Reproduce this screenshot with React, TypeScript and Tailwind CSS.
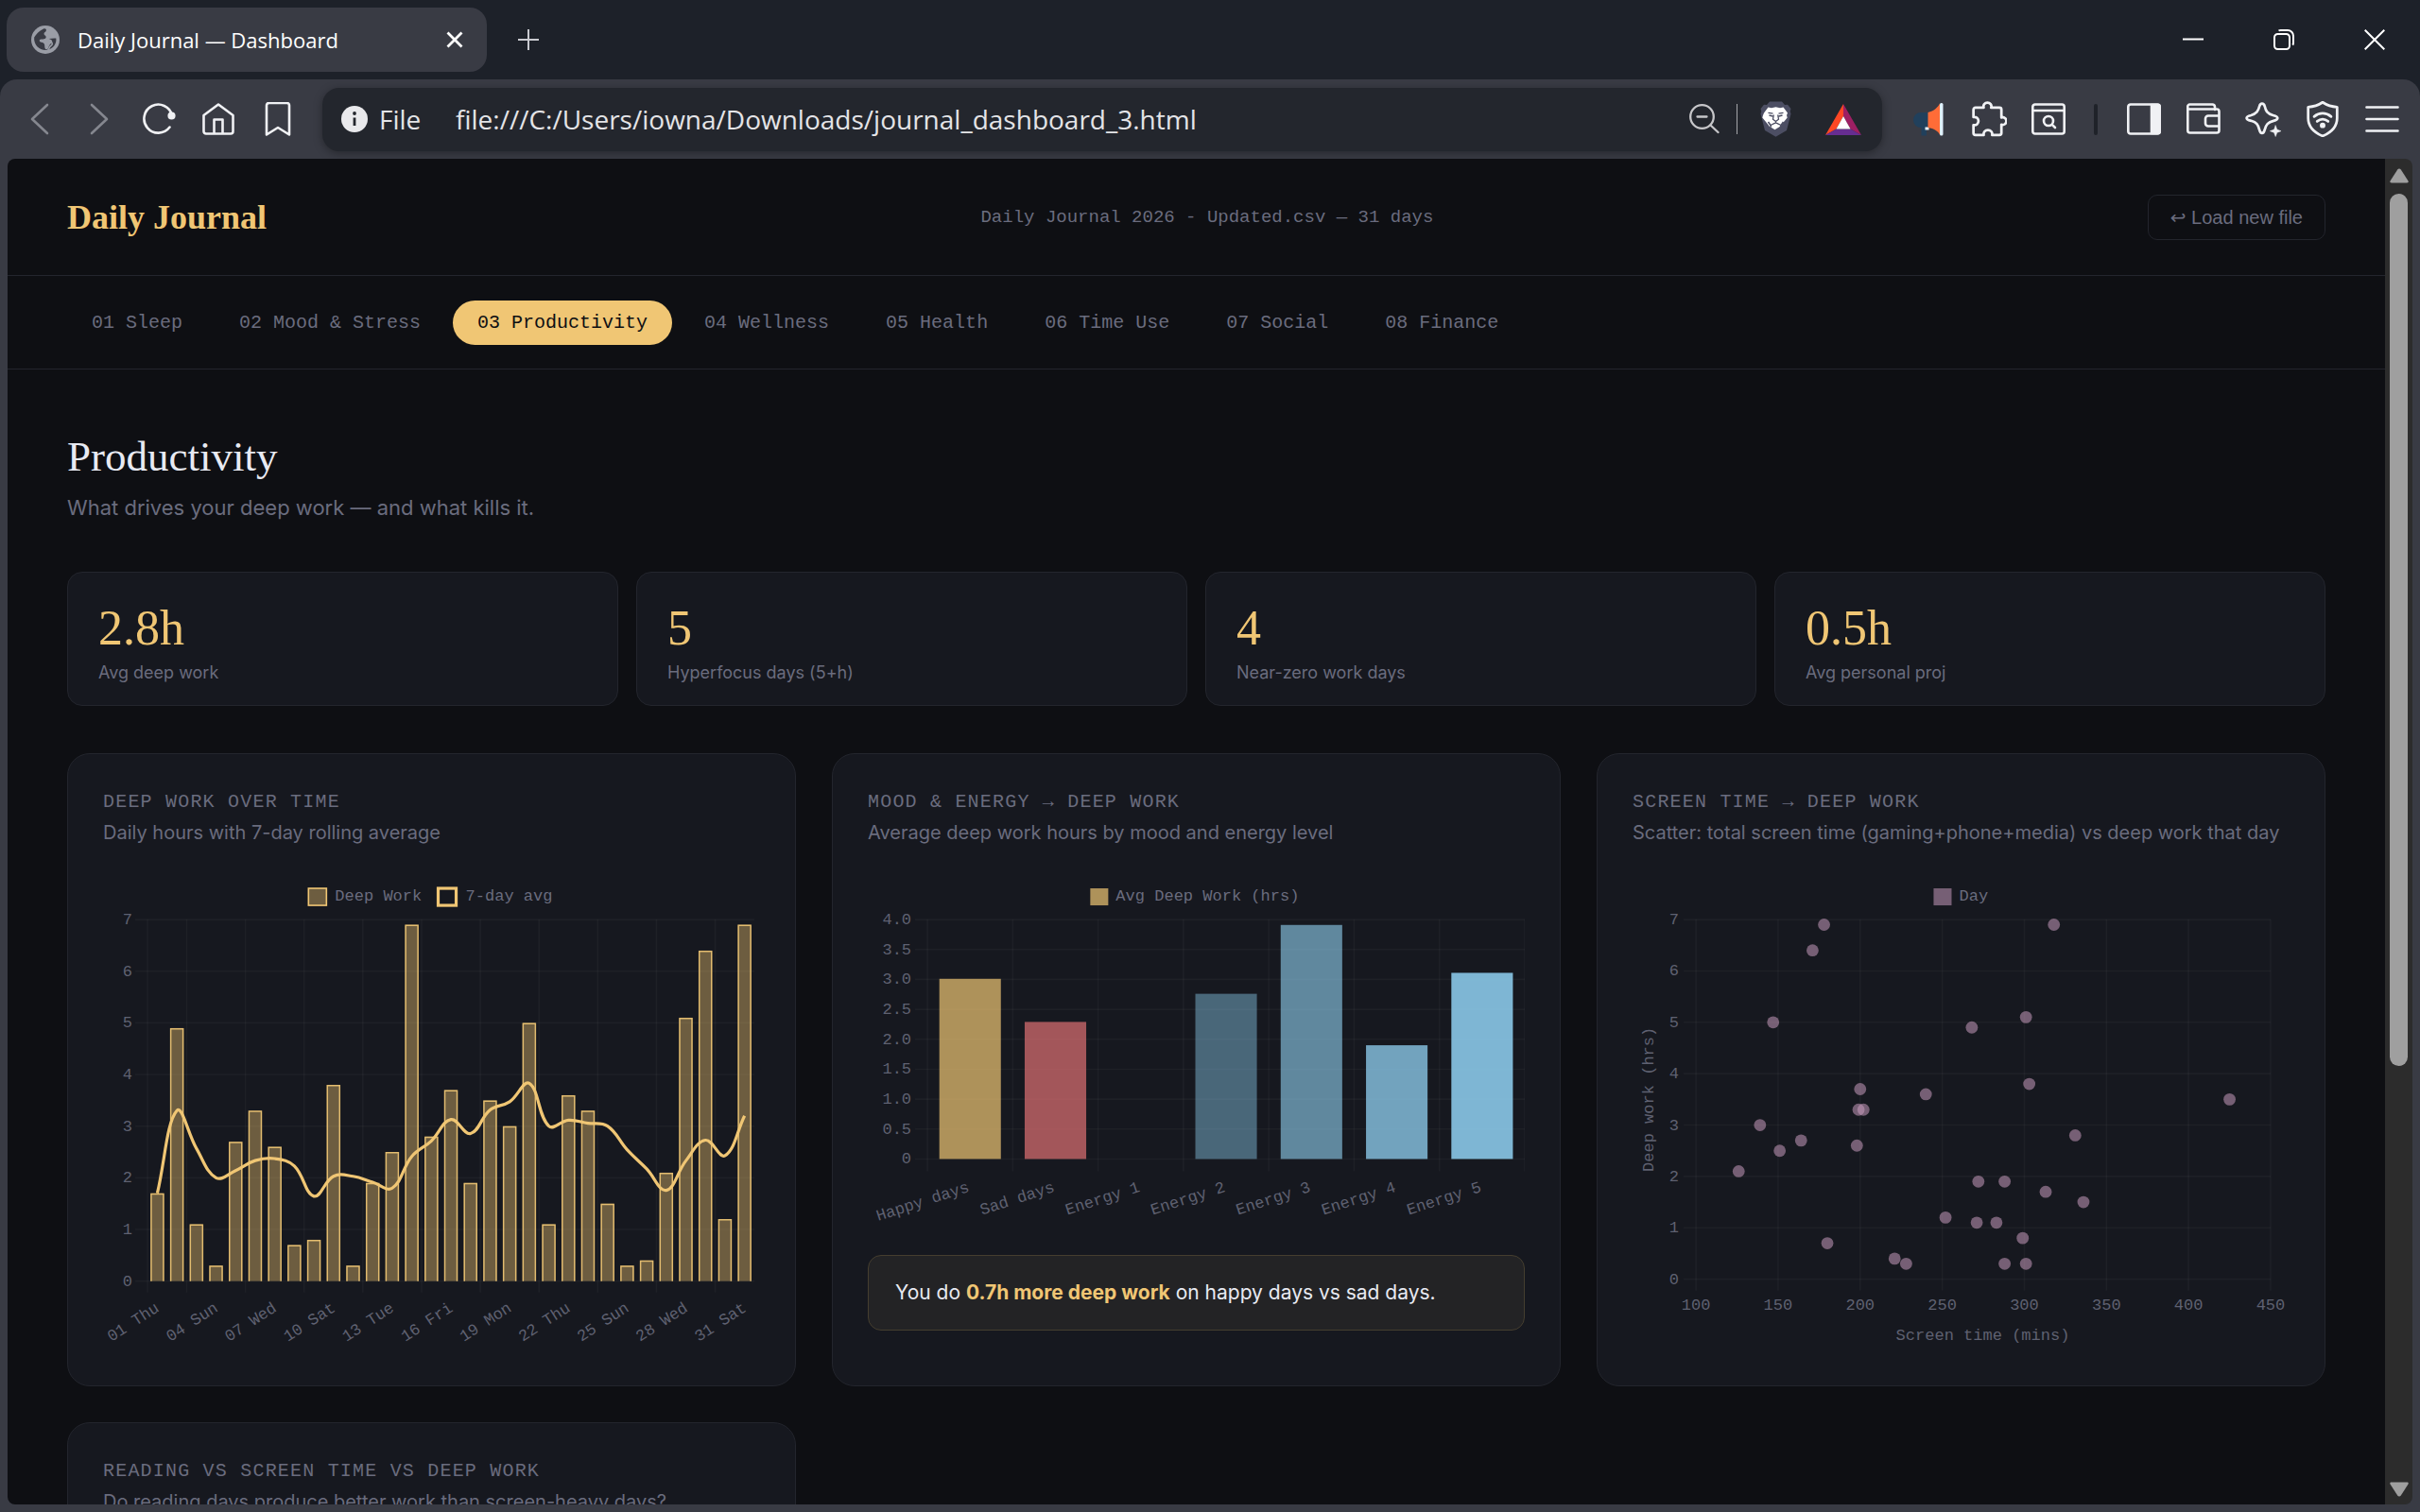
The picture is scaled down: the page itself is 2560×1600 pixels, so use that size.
import type { ReactNode } from "react";

const SERIF = "font-['Liberation_Serif',serif]";
const MONO = "font-['Liberation_Mono',monospace]";
const CHART_FONT = "'Liberation Mono', monospace";
const TICK = "#5f6171";
const LEGEND = "#6a6c7e";
const GRID = "rgba(255,255,255,0.035)";
const GOLD = "#f0c674";

/* ---------- browser chrome ---------- */

function Globe() {
  return (
    <svg viewBox="0 0 30 30" className="size-[30px] shrink-0" aria-hidden="true">
      <circle cx="15" cy="15" r="15" fill="#9a9da6" />
      <path
        d="M3.2 12.5C5 9.5 8 5.500 13 3.400c2.200-.4 3.300.4 2.800 2.100-.4 1.500-2.300 1.700-2.300 3.300 0 1.500 2.200 1.700 2.200 3.400 0 1.600-1.500 2.300-3.400 2.300H10.500c-1.500 0-2.200 1.200-1.500 2.300.8 1.200 2.800.9 4.200 1.900 1.500 1.100.8 3.300 1.300 5 .3 1.200 1.400 2.100 2.600 1.300 1.500-1 1.200-3.200 2.400-4.600 1.100-1.300 2.700-1.700 2.700-3.400 0-1.900-2.100-2-3.300-2.900 2.500-.4 5-1 7.400-.5 1 5.800-3.500 11.900-10.300 12.400C9 26.500 2.300 20.500 3.200 12.500z"
        fill="#393b44"
      />
      <path d="M13.200 15.600c1.800-1.600 4-1.300 5.200.2 1.300 1.500 3.900 1.300 3.900 3.500 0 1.700-1.900 2-2.800 3.500-.8 1.300-.9 3.300-2.400 3.700" fill="none" stroke="#9a9da6" strokeWidth="1.600" />
    </svg>
  );
}

function ToolButton({ label, children }: { label: string; children: ReactNode }) {
  return (
    <button type="button" aria-label={label} className="flex h-12 w-[63px] items-center justify-center">
      {children}
    </button>
  );
}

function Icon({ children, w = 36, dim = false }: { children: ReactNode; w?: number; dim?: boolean }) {
  return (
    <svg
      width={w}
      height={w}
      viewBox="0 0 36 36"
      fill="none"
      stroke={dim ? "#85878f" : "#f0f1f4"}
      strokeWidth="2.600"
      strokeLinecap="round"
      strokeLinejoin="round"
      aria-hidden="true"
    >
      {children}
    </svg>
  );
}

function TabStrip() {
  return (
    <div className="flex h-[84px] shrink-0 items-start pl-[7px]">
      <div className="mt-2 flex h-[68px] w-[508px] items-center rounded-[18px] bg-[#393b44] pr-[22px] pl-[26px]">
        <Globe />
        <span className="ml-[19px] flex-1 text-[22px] whitespace-nowrap text-white">Daily Journal — Dashboard</span>
        <button type="button" aria-label="Close tab" className="flex size-6 items-center justify-center">
          <svg viewBox="0 0 18 18" className="size-[18px]" stroke="#fff" strokeWidth="2.800" aria-hidden="true">
            <path d="M1.500 1.500l15 15M16.500 1.500l-15 15" />
          </svg>
        </button>
      </div>
      <button type="button" aria-label="New tab" className="mt-6 ml-[26px] flex size-9 items-center justify-center">
        <svg viewBox="0 0 22 22" className="size-[22px]" stroke="#c9cad0" strokeWidth="2" aria-hidden="true">
          <path d="M0 11h22M11 0v22" />
        </svg>
      </button>
      <div className="mt-6 ml-auto flex">
        <button type="button" aria-label="Minimize" className="flex h-9 w-24 items-center justify-center">
          <svg viewBox="0 0 22 22" className="size-[22px]" stroke="#fff" strokeWidth="2" aria-hidden="true">
            <path d="M0 10.500h22" />
          </svg>
        </button>
        <button type="button" aria-label="Restore" className="flex h-9 w-24 items-center justify-center">
          <svg viewBox="0 0 22 22" className="size-[22px]" fill="none" stroke="#fff" strokeWidth="2" aria-hidden="true">
            <rect x="1" y="5" width="16" height="16" rx="3.500" />
            <path d="M5.500 1.500C6 1.200 6.500 1 7.500 1H15a6 6 0 0 1 6 6v7.500c0 1-.2 1.500-.7 2.200" />
          </svg>
        </button>
        <button type="button" aria-label="Close window" className="flex h-9 w-24 items-center justify-center">
          <svg viewBox="0 0 22 22" className="size-[22px]" stroke="#fff" strokeWidth="2" aria-hidden="true">
            <path d="M.7.7l20.600 20.600M21.300.7L.7 21.300" />
          </svg>
        </button>
      </div>
    </div>
  );
}

function AddressBar() {
  return (
    <div className="ml-4 flex h-[67px] min-w-0 flex-1 items-center rounded-[18px] bg-[#23262d] pr-[22px] pl-5 shadow-[0_2px_10px_rgba(0,0,0,0.35)]">
      <svg viewBox="0 0 28 28" className="size-7 shrink-0" aria-hidden="true">
        <circle cx="14" cy="14" r="14" fill="#e9e9ec" />
        <circle cx="14" cy="8" r="1.900" fill="#23262d" />
        <path d="M14 12.500v8.500" stroke="#23262d" strokeWidth="2.800" />
      </svg>
      <label htmlFor="address" className="ml-3 w-[81px] text-[28px] text-[#e4e4e7]">
        File
      </label>
      <input
        id="address"
        type="text"
        defaultValue="file:///C:/Users/iowna/Downloads/journal_dashboard_3.html"
        className="min-w-0 flex-1 bg-transparent text-[28px] text-[#e4e4e7] outline-none"
      />
      <button type="button" aria-label="Zoom out" className="shrink-0">
        <svg viewBox="0 0 32 32" className="size-8" fill="none" stroke="#c6c6c9" strokeWidth="2.300" strokeLinecap="round" aria-hidden="true">
          <circle cx="13.500" cy="13.500" r="12.300" />
          <path d="M22.500 22.500L30.500 30M8.500 13.500h10" />
        </svg>
      </button>
      <span className="ml-[18px] h-8 w-px shrink-0 bg-[#a5a6aa]" />
      <button type="button" aria-label="Brave Shields" className="ml-6 shrink-0">
        <svg viewBox="0 0 33 38" className="h-[38px] w-[33px]" aria-hidden="true">
          <path
            d="M10 0.500h13l3 3.500 3-.3 3.500 4.300-.8 3 .8 2.500-4.500 17.500L22 34.500l-5.500 3.300L11 34.500 5 31 .5 13.500l.8-2.500-.8-3L4 3.700l3 .3z"
            fill="#4c4e63"
          />
          <path
            d="M4 12.500L8.500 6.500l3.500.8 4.500-1.100 4.500 1.100 3.500-.8 4.500 6-1 2.500.7 2.500-6.200 7.500-1 1.500-6 3.700-6-3.700-1-1.500-6.200-7.500.7-2.500z"
            fill="#fff"
          />
          <path
            d="M8.500 12.300l5 .9M24.500 12.300l-5 .9M9.500 15l3.800 1M23.500 15l-3.800 1M14.300 14.500l-.8 4.700 3 2.300 3-2.300-.8-4.700M16.500 21.500v1.800M11 25.500l5.500-2.700 5.500 2.700"
            fill="none"
            stroke="#4c4e63"
            strokeWidth="1.300"
          />
          <path d="M8.500 22l2.500 3.500.5 2M24.500 22L22 25.500l-.5 2" fill="none" stroke="#4c4e63" strokeWidth="1.600" />
        </svg>
      </button>
      <button type="button" aria-label="Brave Rewards" className="ml-9 shrink-0">
        <svg viewBox="0 0 38 33" className="h-[33px] w-[38px]" aria-hidden="true">
          <path d="M19 0v13L11.500 26.500 0 33z" fill="#ff4724" />
          <path d="M19 0v13l7.500 13.500L38 33z" fill="#9e1f63" />
          <path d="M0 33h38l-11.500-6.500h-15z" fill="#662d91" />
          <path d="M19 13l7.500 13.500h-15z" fill="#fff" />
        </svg>
      </button>
    </div>
  );
}

function Toolbar() {
  return (
    <div className="flex h-[84px] shrink-0 items-center rounded-t-[18px] bg-[#393b44] pr-[9px] pl-[10px]">
      <ToolButton label="Back">
        <Icon dim>
          <path d="M26 3L10 18l16 15" />
        </Icon>
      </ToolButton>
      <ToolButton label="Forward">
        <Icon dim>
          <path d="M10 3l16 15-16 15" />
        </Icon>
      </ToolButton>
      <ToolButton label="Reload">
        <Icon>
          <path d="M29.500 26.500A15 15 0 1 1 32 14" />
          <circle cx="31.500" cy="14.500" r="2.800" fill="#f0f1f4" />
        </Icon>
      </ToolButton>
      <ToolButton label="Home">
        <Icon>
          <path d="M2.500 14L18 2.500 33.500 14v17a2.500 2.500 0 0 1-2.500 2.500H5A2.500 2.500 0 0 1 2.500 31zM13.500 33V18.500h9V33" />
        </Icon>
      </ToolButton>
      <ToolButton label="Bookmark">
        <Icon>
          <path d="M6 3.500A2.500 2.500 0 0 1 8.500 1h19A2.500 2.500 0 0 1 30 3.500V34.500L18 27 6 34.500z" />
        </Icon>
      </ToolButton>
      <AddressBar />
      <div className="ml-[18px] flex shrink-0 items-center">
        <ToolButton label="Announcement extension">
          <svg width="34" height="36" viewBox="0 0 34 36" aria-hidden="true">
            <path d="M8 11h8v16h-2v8.500H8.500V27H8a8 8 0 0 1 0-16z" fill="#21405c" />
            <path d="M12.500 26.500h4v3h-4z" fill="#e9f3fb" />
            <path d="M15.500 11C22 9.500 26 5.500 28 1.500v33C26 30.500 22 28 15.500 27z" fill="#ff6c37" />
            <rect x="28" y="1" width="3.500" height="34.500" rx="1.500" fill="#dff0fc" />
          </svg>
        </ToolButton>
        <ToolButton label="Extensions">
          <Icon w={38}>
            <path d="M4.500 6.500h8.300c-1-2.800 1.200-5 3.700-5s4.700 2.200 3.700 5h8.300a2 2 0 0 1 2 2v8c2.800-1 5 1.200 5 3.500s-2.200 4.500-5 3.500v8.500a2 2 0 0 1-2 2h-7.300c.6-3-1.500-5-4.200-5s-4.800 2-4.200 5H4.500a2 2 0 0 1-2-2v-8c3 .6 5-1.500 5-4s-2-4.600-5-4V8.500a2 2 0 0 1 2-2z" />
          </Icon>
        </ToolButton>
        <ToolButton label="Search tabs">
          <Icon>
            <rect x="1.300" y="2.500" width="33.400" height="31" rx="2.500" />
            <path d="M2 9h32" />
            <circle cx="18" cy="20" r="5" />
            <path d="M21.800 23.800l3.200 3.200" />
          </Icon>
        </ToolButton>
        <div className="flex w-[38px] justify-center">
          <span className="h-[33px] w-1 rounded-full bg-[#1f2229]" />
        </div>
        <ToolButton label="Sidebar">
          <Icon>
            <rect x="1.300" y="2.500" width="33.400" height="31" rx="2.500" />
            <path d="M26 3h7a1.500 1.500 0 0 1 1.500 1.500v27A1.500 1.500 0 0 1 33 33h-7z" fill="#f0f1f4" />
          </Icon>
        </ToolButton>
        <ToolButton label="Wallet">
          <Icon>
            <path d="M30 8V5a2.500 2.500 0 0 0-2.500-2.500h-24A2.200 2.200 0 0 0 1.300 5v25A2.500 2.500 0 0 0 3.800 32.500H32a2.500 2.500 0 0 0 2.500-2.500V10A2.500 2.500 0 0 0 32 7.500H2M34 14.500H23a3 3 0 0 0-3 3v5a3 3 0 0 0 3 3h11" />
          </Icon>
        </ToolButton>
        <ToolButton label="Leo AI">
          <Icon w={38}>
            <path d="M17 2.500c1.500 0 2.200 1 2.600 2.500 1.200 5 2.400 7.600 8.400 9.200 2 .5 4.500 1.300 4.500 2.800s-2 2.200-4 2.700c-5.500 1.500-7.700 3.800-9 9.300-.4 1.700-1 3-2.500 3s-2.200-1.300-2.600-3c-1.300-5.500-3-7.800-8.400-9.300-2-.5-4.500-1.200-4.500-2.700S4 14.700 6 14.200c5.500-1.600 7.200-4.200 8.400-9.200.4-1.500 1.100-2.500 2.600-2.500z" />
            <path d="M30.500 24.500l1.500 4 4 1.500-4 1.500-1.500 4-1.500-4-4-1.500 4-1.500z" fill="#f0f1f4" strokeWidth="0.500" />
          </Icon>
        </ToolButton>
        <ToolButton label="VPN">
          <Icon w={38}>
            <path d="M18 1.200c4.500 3 9 4.500 14.500 4.800V17c0 8-5 14-14.500 18C8.500 31 3.500 25 3.500 17V6C9 5.700 13.500 4.200 18 1.200z" />
            <path d="M9.500 15.500c5-4.300 12-4.300 17 0M12.500 20.300c3.500-2.800 7.500-2.800 11 0" />
            <circle cx="18" cy="24.300" r="1.500" fill="#f0f1f4" />
          </Icon>
        </ToolButton>
        <ToolButton label="Menu">
          <Icon>
            <path d="M1.500 5.500h33M1.500 18h33M1.500 30.500h33" />
          </Icon>
        </ToolButton>
      </div>
    </div>
  );
}

function Scrollbar() {
  return (
    <div className="flex w-[29px] shrink-0 flex-col items-center bg-[#2c2c2c]" aria-hidden="true">
      <svg viewBox="0 0 20 16" className="mt-[10px] h-4 w-5 shrink-0">
        <path d="M8.200 1.500a2.200 2.200 0 0 1 3.600 0l7.700 12c.6 1 0 2-1.200 2H1.700c-1.200 0-1.800-1-1.200-2z" fill="#9f9f9f" />
      </svg>
      <div className="mt-[11px] flex w-[19px] flex-1 flex-col">
        <div className="flex-[21] rounded-full bg-[#9f9f9f]" />
        <div className="flex-[10]" />
      </div>
      <svg viewBox="0 0 20 16" className="mb-2 h-4 w-5 shrink-0">
        <path d="M8.200 14.500a2.200 2.200 0 0 0 3.600 0l7.700-12c.6-1 0-2-1.200-2H1.700c-1.200 0-1.800 1-1.200 2z" fill="#9f9f9f" />
      </svg>
    </div>
  );
}

/* ---------- charts ---------- */

function HGrid({ ys, x1, x2 }: { ys: number[]; x1: number; x2: number }) {
  return (
    <>
      {ys.map((y) => (
        <line key={y} x1={x1} x2={x2} y1={y} y2={y} stroke={GRID} strokeWidth="1.600" />
      ))}
    </>
  );
}

function VGrid({ xs, y1, y2 }: { xs: number[]; y1: number; y2: number }) {
  return (
    <>
      {xs.map((x) => (
        <line key={x} x1={x} x2={x} y1={y1} y2={y2} stroke={GRID} strokeWidth="1.600" />
      ))}
    </>
  );
}

const deepWork = [
  1.7, 4.9, 1.1, 0.3, 2.7, 3.3, 2.6, 0.7, 0.8, 3.8, 0.3, 1.9, 2.5, 6.9, 2.8, 3.7, 1.9, 3.5, 3.0, 5.0, 1.1, 3.6, 3.3,
  1.5, 0.3, 0.4, 2.1, 5.1, 6.4, 1.2, 6.9,
];
const dayLabels = ["01 Thu", "04 Sun", "07 Wed", "10 Sat", "13 Tue", "16 Fri", "19 Mon", "22 Thu", "25 Sun", "28 Wed", "31 Sat"];

type Point = { x: number; y: number };

/* Cardinal spline whose control points are weighted by segment length. */
function spline(points: Point[], tension: number) {
  const controls = points.map((p, i) => {
    const prev = points[i - 1] ?? p;
    const next = points[i + 1] ?? p;
    const d01 = Math.hypot(p.x - prev.x, p.y - prev.y);
    const d12 = Math.hypot(next.x - p.x, next.y - p.y);
    const fa = (tension * d01) / (d01 + d12);
    const fb = (tension * d12) / (d01 + d12);
    return {
      before: { x: p.x - fa * (next.x - prev.x), y: p.y - fa * (next.y - prev.y) },
      after: { x: p.x + fb * (next.x - prev.x), y: p.y + fb * (next.y - prev.y) },
    };
  });
  return points
    .map((p, i) => {
      if (i === 0) return `M${p.x} ${p.y}`;
      const a = controls[i - 1].after;
      const b = controls[i].before;
      return `C${a.x} ${a.y} ${b.x} ${b.y} ${p.x} ${p.y}`;
    })
    .join("");
}

function DeepWorkChart() {
  const left = 47;
  const right = 688;
  const top = 57;
  const bottom = 439;
  const step = (right - left) / deepWork.length;
  const cx = (i: number) => left + step * (i + 0.5);
  const y = (v: number) => bottom - ((bottom - top) * v) / 7;
  const ticks = [0, 1, 2, 3, 4, 5, 6, 7];
  const average = deepWork.map((_, i) => {
    const window = deepWork.slice(Math.max(0, i - 6), i + 1);
    return { x: cx(i), y: y(window.reduce((a, b) => a + b, 0) / window.length) };
  });
  return (
    <svg viewBox="0 0 694 512" className="mt-[21px] block w-full" fontFamily={CHART_FONT} fontSize="17" role="img" aria-label="Deep work over time">
      <rect x="217" y="24" width="19" height="18" fill={GOLD} fillOpacity="0.400" stroke={GOLD} strokeWidth="1.600" />
      <text x="245" y="37" fill={LEGEND}>Deep Work</text>
      <rect x="354" y="24" width="19" height="18" fill="none" stroke={GOLD} strokeWidth="3.200" />
      <text x="383" y="37" fill={LEGEND}>7-day avg</text>
      <HGrid ys={ticks.map(y)} x1={34} x2={right} />
      <VGrid xs={[left, ...Array.from({ length: 10 }, (_, k) => left + step * (2 + 3 * k))]} y1={top} y2={bottom + 12} />
      {ticks.map((t) => (
        <text key={t} x="31" y={y(t) + 5} textAnchor="end" fill={TICK}>{t}</text>
      ))}
      {deepWork.map((v, i) => (
        <g key={i}>
          <rect x={cx(i) - 7} y={y(v)} width="14" height={bottom - y(v)} fill={GOLD} fillOpacity="0.400" />
          <path d={`M${cx(i) - 6.5} ${bottom}V${y(v) + 0.8}H${cx(i) + 6.5}V${bottom}`} fill="none" stroke={GOLD} strokeOpacity="0.900" strokeWidth="1.500" />
        </g>
      ))}
      <path d={spline(average, 0.4)} fill="none" stroke={GOLD} strokeWidth="3.200" strokeLinejoin="round" />
      {dayLabels.map((label, k) => (
        <text key={label} textAnchor="end" fill={TICK} transform={`translate(${cx(k * 3) + 3} 470) rotate(-33)`}>{label}</text>
      ))}
    </svg>
  );
}

const moodBars = [
  { label: "Happy days", value: 3.01, color: GOLD, alpha: 0.7 },
  { label: "Sad days", value: 2.29, color: "#e07074", alpha: 0.7 },
  { label: "Energy 1", value: 0, color: "#88c4e4", alpha: 0.3 },
  { label: "Energy 2", value: 2.76, color: "#88c4e4", alpha: 0.46 },
  { label: "Energy 3", value: 3.91, color: "#88c4e4", alpha: 0.65 },
  { label: "Energy 4", value: 1.9, color: "#88c4e4", alpha: 0.81 },
  { label: "Energy 5", value: 3.11, color: "#88c4e4", alpha: 0.92 },
];

function MoodChart() {
  const left = 63;
  const right = 694;
  const top = 57;
  const bottom = 310;
  const step = (right - left) / 7;
  const y = (v: number) => bottom - ((bottom - top) * v) / 4;
  const ticks = [0, 0.5, 1, 1.5, 2, 2.5, 3, 3.5, 4];
  return (
    <svg viewBox="0 0 694 384" className="mt-[21px] block w-full" fontFamily={CHART_FONT} fontSize="17" role="img" aria-label="Mood and energy against deep work">
      <rect x="235" y="24" width="19" height="18" fill={GOLD} fillOpacity="0.700" />
      <text x="262" y="37" fill={LEGEND}>Avg Deep Work (hrs)</text>
      <HGrid ys={ticks.map(y)} x1={50} x2={right} />
      <VGrid xs={Array.from({ length: 8 }, (_, k) => left + step * k)} y1={top} y2={bottom + 13} />
      {ticks.map((t) => (
        <text key={t} x="46" y={y(t) + 5} textAnchor="end" fill={TICK}>{t === 0 ? "0" : t.toFixed(1)}</text>
      ))}
      {moodBars.map((b, i) => {
        const cx = left + step * (i + 0.5);
        return (
          <g key={b.label}>
            <rect x={cx - 32.5} y={y(b.value)} width="65" height={bottom - y(b.value)} fill={b.color} fillOpacity={b.alpha} />
            <text textAnchor="end" fill={TICK} transform={`translate(${cx} 344) rotate(-18)`}>{b.label}</text>
          </g>
        );
      })}
    </svg>
  );
}

const days: [number, number][] = [
  [178, 6.9], [171, 6.4], [147, 5.0], [268, 4.9], [301, 5.1], [318, 6.9], [200, 3.7], [240, 3.6], [303, 3.8], [425, 3.5],
  [199, 3.3], [202, 3.3], [139, 3.0], [151, 2.5], [164, 2.7], [198, 2.6], [331, 2.8], [126, 2.1], [272, 1.9], [288, 1.9],
  [313, 1.7], [336, 1.5], [252, 1.2], [271, 1.1], [283, 1.1], [299, 0.8], [180, 0.7], [221, 0.4], [228, 0.3], [288, 0.3],
  [301, 0.3],
];

function ScatterChart() {
  const left = 67;
  const right = 674;
  const top = 57;
  const bottom = 437;
  const x = (v: number) => left + ((right - left) * (v - 100)) / 350;
  const y = (v: number) => bottom - ((bottom - top) * v) / 7;
  const yTicks = [0, 1, 2, 3, 4, 5, 6, 7];
  const xTicks = [100, 150, 200, 250, 300, 350, 400, 450];
  return (
    <svg viewBox="0 0 694 512" className="mt-[21px] block w-full" fontFamily={CHART_FONT} fontSize="17" role="img" aria-label="Screen time against deep work">
      <rect x="318" y="24" width="19" height="18" fill="#c69bbb" fillOpacity="0.550" />
      <text x="345" y="37" fill={LEGEND}>Day</text>
      <HGrid ys={yTicks.map(y)} x1={54} x2={right} />
      <VGrid xs={xTicks.map(x)} y1={top} y2={bottom + 12} />
      {yTicks.map((t) => (
        <text key={t} x="49" y={y(t) + 5} textAnchor="end" fill={TICK}>{t}</text>
      ))}
      {xTicks.map((t) => (
        <text key={t} x={x(t)} y="469" textAnchor="middle" fill={TICK}>{t}</text>
      ))}
      <text x="370" y="501" textAnchor="middle" fill={TICK}>Screen time (mins)</text>
      <text textAnchor="middle" fill={TICK} transform="translate(22 247) rotate(-90)">Deep work (hrs)</text>
      {days.map(([mins, hrs], i) => (
        <circle key={i} cx={x(mins)} cy={y(hrs)} r="6.400" fill="#c69bbb" fillOpacity="0.550" />
      ))}
    </svg>
  );
}

/* ---------- dashboard ---------- */

const tabs = ["01 Sleep", "02 Mood & Stress", "03 Productivity", "04 Wellness", "05 Health", "06 Time Use", "07 Social", "08 Finance"];

const stats = [
  { value: "2.8h", label: "Avg deep work" },
  { value: "5", label: "Hyperfocus days (5+h)" },
  { value: "4", label: "Near-zero work days" },
  { value: "0.5h", label: "Avg personal proj" },
];

function Card({ title, subtitle, children }: { title: string; subtitle: string; children: ReactNode }) {
  return (
    <article className="rounded-[24px] border border-[#23252d] bg-[#16181f] p-[37px]">
      <h3 className={`${MONO} text-[20px] leading-7 tracking-[0.06em] text-[#6a6c7e] uppercase`}>{title}</h3>
      <p className="mt-1 text-[20px] leading-7 text-[#6a6c7e]">{subtitle}</p>
      {children}
    </article>
  );
}

function Dashboard() {
  return (
    <div className="min-w-0 flex-1 overflow-hidden bg-[#0e0f13] font-['Inter',sans-serif]">
      <header className="flex items-center justify-between border-b border-[#23252d] px-[63px] pt-[38px] pb-[37px]">
        <h1 className={`${SERIF} text-[36px] leading-[48px] font-bold text-[#f0c674]`}>Daily Journal</h1>
        <p className={`${MONO} text-[19px] text-[#6a6c7e]`}>Daily Journal 2026 - Updated.csv — 31 days</p>
        <button
          type="button"
          className="h-12 rounded-[10px] border border-[#23252d] px-[23px] font-['Liberation_Sans','DejaVu_Sans',sans-serif] text-[20px] text-[#6a6c7e]"
        >
          ↩ Load new file
        </button>
      </header>
      <nav className="flex gap-2 border-b border-[#23252d] px-[63px] pt-[26px] pb-[25px]">
        {tabs.map((tab, i) => (
          <button
            key={tab}
            type="button"
            className={`${MONO} h-[47px] rounded-full px-[26px] text-[20px] whitespace-nowrap ${
              i === 2 ? "bg-[#f0c674] text-[#0e0f13]" : "text-[#6a6c7e]"
            }`}
          >
            {tab}
          </button>
        ))}
      </nav>
      <main className="px-[63px] pt-16">
        <h2 className={`${SERIF} text-[45px] leading-[56px] text-[#e8eaf2]`}>Productivity</h2>
        <p className="mt-[10px] text-[22px] leading-8 text-[#6a6c7e]">What drives your deep work — and what kills it.</p>
        <section className="mt-[52px] grid grid-cols-4 gap-[19px]">
          {stats.map((s) => (
            <div key={s.label} className="rounded-[16px] border border-[#23252d] bg-[#16181f] px-8 pt-[33px] pb-5">
              <div className={`${SERIF} text-[52px] leading-[52px] text-[#f0c674]`}>{s.value}</div>
              <div className="mt-[7px] text-[18px] leading-7 text-[#6a6c7e]">{s.label}</div>
            </div>
          ))}
        </section>
        <section className="mt-[50px] grid grid-cols-3 gap-[38px]">
          <Card title="Deep Work Over Time" subtitle="Daily hours with 7-day rolling average">
            <DeepWorkChart />
          </Card>
          <Card title="Mood & Energy → Deep Work" subtitle="Average deep work hours by mood and energy level">
            <MoodChart />
            <p className="mt-[27px] rounded-[14px] border border-[#453e2f] bg-[#232325] px-7 py-[23px] text-[21px] leading-8 text-[#e8eaf2]">
              You do <strong className="font-bold text-[#f0c674]">0.7h more deep work</strong> on happy days vs sad days.
            </p>
          </Card>
          <Card title="Screen Time → Deep Work" subtitle="Scatter: total screen time (gaming+phone+media) vs deep work that day">
            <ScatterChart />
          </Card>
          <Card title="Reading vs Screen Time vs Deep Work" subtitle="Do reading days produce better work than screen-heavy days?">
            <div className="h-96" />
          </Card>
        </section>
      </main>
    </div>
  );
}

export default function App() {
  return (
    <div className="flex h-screen flex-col overflow-hidden bg-[#1d2129] font-['Open_Sans','Noto_Sans',sans-serif]">
      <TabStrip />
      <Toolbar />
      <div className="flex min-h-0 flex-1 bg-[#393b44] px-2 pb-2">
        <div className="flex min-w-0 flex-1 overflow-hidden rounded-[8px]">
          <Dashboard />
          <Scrollbar />
        </div>
      </div>
    </div>
  );
}
